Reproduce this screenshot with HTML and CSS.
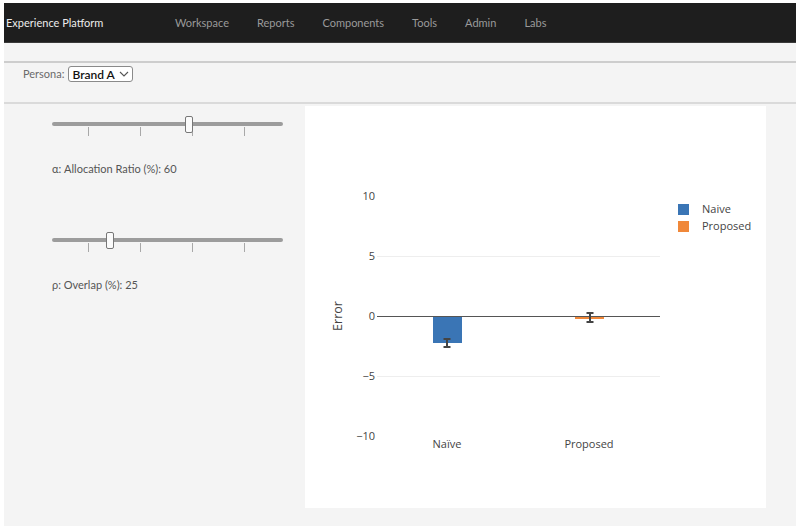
FILE: index.html
```html
<!DOCTYPE html>
<html lang="en">
<head>
<meta charset="utf-8">
<title>Experience Platform</title>
<link rel="stylesheet" href="styles.css">
</head>
<body>
<header class="topbar">
  <div class="brand">Experience Platform</div>
  <nav class="nav">
    <span class="nav-item">Workspace</span>
    <span class="nav-item">Reports</span>
    <span class="nav-item">Components</span>
    <span class="nav-item">Tools</span>
    <span class="nav-item">Admin</span>
    <span class="nav-item">Labs</span>
  </nav>
</header>
<div class="band"></div>
<div class="persona-row">
  <span class="persona-label">Persona:</span>
  <span class="select">Brand A
    <svg class="chev" width="10" height="6" viewBox="0 0 10 6"><path d="M1 1 L5 5 L9 1" fill="none" stroke="#555" stroke-width="1.1"/></svg>
  </span>
</div>
<main class="main">
  <section class="controls">
    <div class="slider">
      <div class="track"></div>
      <div class="ticks"><i></i><i></i><i></i><i></i></div>
      <div class="thumb thumb-60"></div>
    </div>
    <div class="slider-label">α: Allocation Ratio (%): 60</div>
    <div class="slider second">
      <div class="track"></div>
      <div class="ticks"><i></i><i></i><i></i><i></i></div>
      <div class="thumb thumb-25"></div>
    </div>
    <div class="slider-label">ρ: Overlap (%): 25</div>
  </section>
  <section class="chart-panel">
    <svg class="chart" width="461" height="402" viewBox="0 0 461 402">
      <g class="grid">
        <line x1="72" y1="150.5" x2="355" y2="150.5"/>
        <line x1="72" y1="270.5" x2="355" y2="270.5"/>
      </g>
      <g class="ytick" text-anchor="end">
        <text x="70" y="94">10</text>
        <text x="70" y="154">5</text>
        <text x="70" y="214">0</text>
        <text x="70" y="274">−5</text>
        <text x="70" y="334">−10</text>
      </g>
      <text class="ytitle" transform="translate(37,210) rotate(-90)" text-anchor="middle">Error</text>
      <rect x="128" y="210" width="29" height="27" fill="#3a75b5"/>
      <rect x="270" y="210" width="29" height="3" fill="#f0883a"/>
      <line x1="72" y1="210.5" x2="355" y2="210.5" stroke="#555" stroke-width="1"/>
      <g class="err">
        <line x1="142" y1="233" x2="142" y2="241"/>
        <line x1="138.5" y1="233" x2="145.5" y2="233"/>
        <line x1="138.5" y1="241" x2="145.5" y2="241"/>
        <line x1="285" y1="207" x2="285" y2="216"/>
        <line x1="281.5" y1="207" x2="288.5" y2="207"/>
        <line x1="281.5" y1="216" x2="288.5" y2="216"/>
      </g>
      <g class="xtick" text-anchor="middle">
        <text x="142" y="342">Naïve</text>
        <text x="284" y="342">Proposed</text>
      </g>
      <g class="legend">
        <rect x="373" y="98" width="11" height="11" fill="#3a75b5"/>
        <rect x="373" y="115" width="11" height="11" fill="#f0883a"/>
        <text x="397" y="107">Naive</text>
        <text x="397" y="124">Proposed</text>
      </g>
    </svg>
  </section>
</main>
</body>
</html>
```
FILE: styles.css
```css
* { box-sizing: border-box; }
html, body { background: #ffffff; }
body {
  margin: 3px 5px 3px 4px;
  font-family: "Lato", "Open Sans", sans-serif;
}
.topbar {
  height: 40px;
  background: #1e1e1e;
  display: flex;
  align-items: center;
  border-bottom: 1px solid #3a3a3a;
}
.brand {
  color: #ececec;
  font-size: 11px;
  padding-left: 2px;
  width: 171px;
}
.nav {
  display: flex;
  gap: 28px;
  font-size: 11px;
  color: #9a9a9a;
}
.band {
  background: #f4f4f4;
  border-bottom: 2px solid #cdcdcd;
  height: 20px;
}
.persona-row {
  height: 41px;
  background: #f4f4f4;
  border-bottom: 2px solid #dadada;
  display: flex;
  align-items: flex-start;
  padding: 3px 0 0 19px;
}
.persona-label {
  color: #6a6a6a;
  font-size: 11px;
  line-height: 16px;
  margin-right: 4px;
}
.select {
  display: inline-flex;
  align-items: center;
  height: 16px;
  padding: 0 3px 0 3px;
  border: 1px solid #8a8a8a;
  border-radius: 3px;
  background: #fff;
  color: #111;
  font-size: 12px;
  font-weight: 600;
  gap: 4px;
}
.chev { display: block; }
.main {
  height: 422px;
  background: #f4f4f4;
  display: flex;
  align-items: flex-start;
}
.controls {
  width: 301px;
  padding: 18px 0 0 48px;
}
.slider {
  position: relative;
  width: 231px;
}
.slider.second { margin-top: 61px; }
.track {
  height: 4px;
  background: #9c9c9c;
  border-radius: 2px;
}
.ticks {
  display: flex;
  gap: 51px;
  padding-left: 36px;
  margin-top: 1px;
  height: 9px;
}
.ticks i {
  display: block;
  width: 1px;
  height: 9px;
  background: #a8a8a8;
}
.thumb {
  position: absolute;
  top: -6px;
  width: 8px;
  height: 17px;
  background: #fbfbfb;
  border: 1px solid #777;
  border-radius: 2px;
}
.thumb-60 { left: 133px; }
.thumb-25 { left: 54px; }
.slider-label {
  margin-top: 25px;
  font-size: 11px;
  line-height: 16px;
  color: #555;
}
.chart-panel {
  width: 461px;
  height: 402px;
  margin-top: 2px;
  background: #ffffff;
}
.chart {
  display: block;
  font-family: "Open Sans", sans-serif;
}
.grid line { stroke: #eeeeee; stroke-width: 1; }
.ytick text, .xtick text, .legend text {
  font-size: 11px;
  fill: #444;
}
.ytitle { font-size: 12.5px; fill: #444; }
.err line { stroke: #444; stroke-width: 2; }
```
